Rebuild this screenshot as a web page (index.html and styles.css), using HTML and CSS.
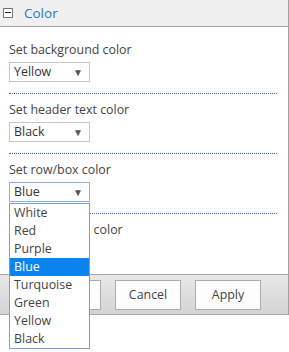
FILE: index.html
```html
<!DOCTYPE html>
<html lang="en">
<head>
    <meta charset="UTF-8">
    <title>Color settings</title>
    <link rel="stylesheet" href="styles.css">
</head>
<body>
    <div class="panel">
        <div class="panel-header">
            <span class="toggle"></span>
            <span class="panel-title">Color</span>
        </div>
        <div class="panel-body">
            <div class="setting">
                <div class="setting-label">Set background color</div>
                <div class="select">Yellow<span class="arrow">&#9660;</span></div>
            </div>
            <div class="setting">
                <div class="setting-label">Set header text color</div>
                <div class="select">Black<span class="arrow">&#9660;</span></div>
            </div>
            <div class="setting">
                <div class="setting-label">Set row/box color</div>
                <div class="select-wrap">
                    <div class="select open">Blue<span class="arrow">&#9660;</span></div>
                    <ul class="options">
                        <li>White</li>
                        <li>Red</li>
                        <li>Purple</li>
                        <li class="selected">Blue</li>
                        <li>Turquoise</li>
                        <li>Green</li>
                        <li>Yellow</li>
                        <li>Black</li>
                    </ul>
                </div>
            </div>
            <div class="setting last">
                <div class="setting-label">Set navigation color</div>
                <div class="select">Blue<span class="arrow">&#9660;</span></div>
            </div>
        </div>
        <div class="panel-footer">
            <button class="btn">OK</button>
            <button class="btn">Cancel</button>
            <button class="btn">Apply</button>
        </div>
    </div>
</body>
</html>
```

FILE: styles.css
```css
* {
    margin: 0;
    padding: 0;
    box-sizing: border-box;
}

html, body {
    min-height: 100vh;
}

body {
    background: #fff;
    font-family: 'Segoe UI', 'Open Sans', sans-serif;
    font-size: 12.4px;
    color: #444;
}

.panel {
    width: 289px;
    border-right: 1px solid #a0a0a0;
}

.panel-header {
    height: 27px;
    background: #f0f0f0;
    border-bottom: 1px solid #a0a0a0;
    display: flex;
    align-items: center;
    padding-left: 3px;
}

.toggle {
    width: 10px;
    height: 10px;
    border: 1px solid #777;
    background: #fff;
    position: relative;
    margin-right: 11px;
}

.toggle::after {
    content: '';
    position: absolute;
    left: 1px;
    right: 1px;
    top: 3px;
    height: 1px;
    background: #222;
}

.panel-title {
    color: #2a78c8;
    font-size: 13.5px;
}

.panel-body {
    padding: 14px 11px 0 9px;
}

.setting {
    padding-bottom: 11px;
    margin-bottom: 7px;
    border-bottom: 1px dotted #3f5fb0;
}

.setting.last {
    border-bottom: none;
    margin-bottom: 0;
}

.setting-label {
    line-height: 17px;
    margin-bottom: 4px;
}

.select {
    width: 81px;
    height: 20px;
    border: 1px solid #c6c6c6;
    padding-left: 4px;
    line-height: 18px;
    position: relative;
    color: #333;
}

.select.open {
    border-color: #8fb0dd;
}

.arrow {
    position: absolute;
    right: 6px;
    top: 0;
    font-size: 10px;
    color: #555;
}

.select-wrap {
    position: relative;
}

.options {
    list-style: none;
    position: absolute;
    top: 21px;
    left: 0;
    width: 81px;
    background: #fff;
    border: 1px solid #7a9fd8;
    z-index: 10;
}

.options li {
    height: 18px;
    line-height: 18px;
    padding-left: 4px;
    color: #444;
}

.options li.selected {
    background: #0b84f0;
    color: #fff;
}

.panel-footer {
    height: 41px;
    margin-top: 1px;
    border-top: 1px solid #a8a8a8;
    border-bottom: 1px solid #a8a8a8;
    background: linear-gradient(#e8e8e8, #d4d4d4);
    display: flex;
    justify-content: flex-end;
    align-items: center;
    gap: 14px;
    padding-right: 27px;
}

.btn {
    width: 66px;
    height: 30px;
    background: #fdfdfd;
    border: 1px solid #ababab;
    font-family: inherit;
    font-size: 12.4px;
    color: #444;
}
```
